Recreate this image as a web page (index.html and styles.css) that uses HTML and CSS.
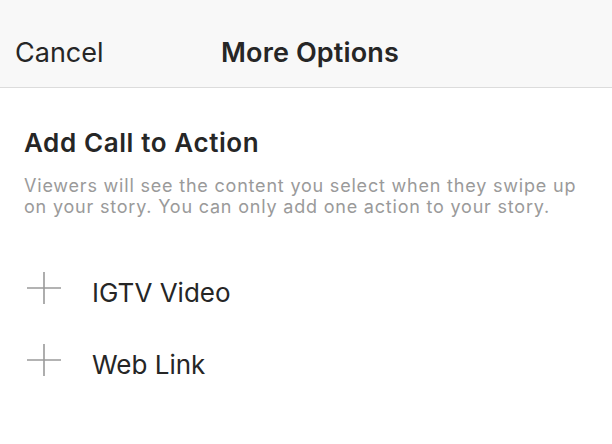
FILE: index.html
```html
<!DOCTYPE html>
<html lang="en">
<head>
<meta charset="utf-8">
<title>More Options</title>
<link rel="stylesheet" href="styles.css">
</head>
<body>
<header class="topbar">
  <span class="cancel">Cancel</span>
  <span class="title">More Options</span>
  <span class="spacer"></span>
</header>
<main class="content">
  <h2 class="heading">Add Call to Action</h2>
  <p class="desc">Viewers will see the content you select when they swipe up on your story. You can only add one action to your story.</p>
  <ul class="options">
    <li class="option">
      <svg class="plus" viewBox="0 0 34 32" width="34" height="32" aria-hidden="true"><path d="M0 16H34M17 0V32" stroke="#9a9a9a" stroke-width="1.6" fill="none"/></svg>
      <span class="label">IGTV Video</span>
    </li>
    <li class="option">
      <svg class="plus" viewBox="0 0 34 32" width="34" height="32" aria-hidden="true"><path d="M0 16H34M17 0V32" stroke="#9a9a9a" stroke-width="1.6" fill="none"/></svg>
      <span class="label">Web Link</span>
    </li>
  </ul>
</main>
</body>
</html>
```
FILE: styles.css
```css
html, body {
  margin: 0;
  padding: 0;
  background: #ffffff;
}
body {
  font-family: Inter, "Liberation Sans", Arial, sans-serif;
  color: #262626;
  width: 612px;
  height: 444px;
  overflow: hidden;
}
.topbar {
  box-sizing: border-box;
  height: 88px;
  padding: 37px 15px 0 15px;
  background: #f8f8f8;
  border-bottom: 1px solid #dcdcdc;
  display: grid;
  grid-template-columns: 1fr auto 1fr;
  align-items: start;
  font-size: 27px;
  line-height: 32px;
}
.cancel {
  font-weight: 400;
}
.title {
  font-weight: 600;
  font-size: 27px;
  letter-spacing: 0.15px;
  padding-left: 8px;
}
.content {
  padding: 0 24px;
}
.heading {
  margin: 40px 0 0 0;
  font-size: 26px;
  line-height: 30px;
  font-weight: 600;
  letter-spacing: 0.6px;
}
.desc {
  margin: 17px 0 0 0;
  font-size: 18px;
  line-height: 21px;
  letter-spacing: 0.8px;
  color: #9a9a9a;
}
.options {
  list-style: none;
  margin: 40px 0 0 0;
  padding: 0;
}
.option {
  height: 71px;
  display: flex;
  align-items: center;
}
.option + .option {
  height: 73px;
}
.plus {
  margin: 0 31px 10px 3px;
  flex: none;
}
.label {
  font-size: 26px;
  line-height: 30px;
}
```
